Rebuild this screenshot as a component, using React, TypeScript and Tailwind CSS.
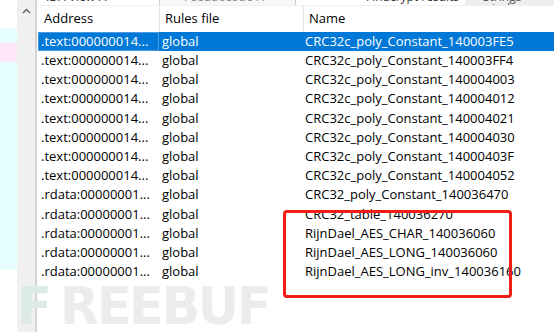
import React from "react"

const rows = [
  { addr: ".text:000000014...", rule: "global", name: "CRC32c_poly_Constant_140003FE5" },
  { addr: ".text:000000014...", rule: "global", name: "CRC32c_poly_Constant_140003FF4" },
  { addr: ".text:000000014...", rule: "global", name: "CRC32c_poly_Constant_140004003" },
  { addr: ".text:000000014...", rule: "global", name: "CRC32c_poly_Constant_140004012" },
  { addr: ".text:000000014...", rule: "global", name: "CRC32c_poly_Constant_140004021" },
  { addr: ".text:000000014...", rule: "global", name: "CRC32c_poly_Constant_140004030" },
  { addr: ".text:000000014...", rule: "global", name: "CRC32c_poly_Constant_14000403F" },
  { addr: ".text:000000014...", rule: "global", name: "CRC32c_poly_Constant_140004052" },
  { addr: ".rdata:00000001...", rule: "global", name: "CRC32_poly_Constant_140036470" },
  { addr: ".rdata:00000001...", rule: "global", name: "CRC32_table_140036270" },
  { addr: ".rdata:00000001...", rule: "global", name: "RijnDael_AES_CHAR_140036060" },
  { addr: ".rdata:00000001...", rule: "global", name: "RijnDael_AES_LONG_140036060" },
  { addr: ".rdata:00000001...", rule: "global", name: "RijnDael_AES_LONG_inv_140036160" },
]

export default function App() {
  return (
    <div className="relative w-[554px] h-[332px] overflow-hidden bg-white flex font-['Open_Sans','Noto_Sans',sans-serif] text-[13px] text-black">
      {/* left neighbour pane */}
      <div className="w-[17px] flex flex-col">
        <div className="h-[28px] bg-white" />
        <div className="h-[15px] bg-[#e6fdff]" />
        <div className="h-[19px] bg-[#fde6f6]" />
        <div className="h-[208px] bg-[#e6fdff]" />
        <div className="flex-1 bg-white" />
      </div>

      {/* scrollbar */}
      <div className="w-[18px] bg-[#f0f0f0] flex flex-col items-center pt-[8px]">
        <svg width="9" height="6" viewBox="0 0 9 6">
          <path d="M1 5 L4.5 1.5 L8 5" stroke="#606060" strokeWidth="1.4" fill="none" />
        </svg>
      </div>
      <div className="w-[2px] bg-[#d4d4d4]" />
      <div className="w-[1px] bg-white" />

      {/* list */}
      <div className="flex-1 flex flex-col">
        {/* tab strip, only its bottom edge shows */}
        <div className="h-[5px] flex overflow-hidden text-[#333] text-[12px] leading-[12px]">
          <div className="w-[121px] bg-white pl-[8px] mt-[-9px]">IDA View-A</div>
          <div className="w-[1px] bg-[#d0d0d0]" />
          <div className="w-[135px] bg-[#f7f7f7] pl-[24px] text-[#888] mt-[-9px]">Pseudocode-A</div>
          <div className="w-[1px] bg-[#d0d0d0]" />
          <div className="w-[167px] bg-white pl-[70px] mt-[-9px]">Findcrypt results</div>
          <div className="flex-1 bg-[#eeeeee] border-l-[2px] border-white pl-[18px] text-[#555] mt-[-9px]">Strings window</div>
        </div>

        {/* header */}
        <div className="h-[27px] flex items-center border-t border-[#f0f0f0]">
          <div className="w-[121px] pl-[6px]">Address</div>
          <div className="w-[1px] h-full bg-[#e5e5e5]" />
          <div className="w-[143px] pl-[5px]">Rules file</div>
          <div className="w-[1px] h-full bg-[#e5e5e5]" />
          <div className="flex-1 pl-[5px]">Name</div>
        </div>

        {rows.map((r, i) => (
          <div
            key={i}
            className={`h-[19.2px] flex items-center whitespace-nowrap ${i === 0 ? "bg-[#0078d7] text-white" : ""}`}
          >
            <div className={`w-[121px] h-full flex items-center pl-[3px] ${i === 0 ? "outline outline-1 -outline-offset-1 outline-[#4c9be0]" : ""}`}>
              {r.addr}
            </div>
            <div className="w-[144px] pl-[3px]">{r.rule}</div>
            <div className="flex-1 pl-[2px]">{r.name}</div>
          </div>
        ))}
      </div>

      {/* watermark */}
      <div className="absolute left-[17px] top-[285px] flex items-start pointer-events-none font-['DejaVu_Sans',sans-serif] font-bold text-[51px] leading-[44px] tracking-[-2.5px]">
        <span className="text-[#dcebe3] w-[43px]">F</span>
        <span className="text-[#ececec]">REEBUF</span>
      </div>

      {/* annotation box */}
      <div className="absolute left-[283px] top-[210px] w-[229px] h-[88px] border-[3px] border-[#f21c16] rounded-[4px] pointer-events-none" />
    </div>
  )
}
